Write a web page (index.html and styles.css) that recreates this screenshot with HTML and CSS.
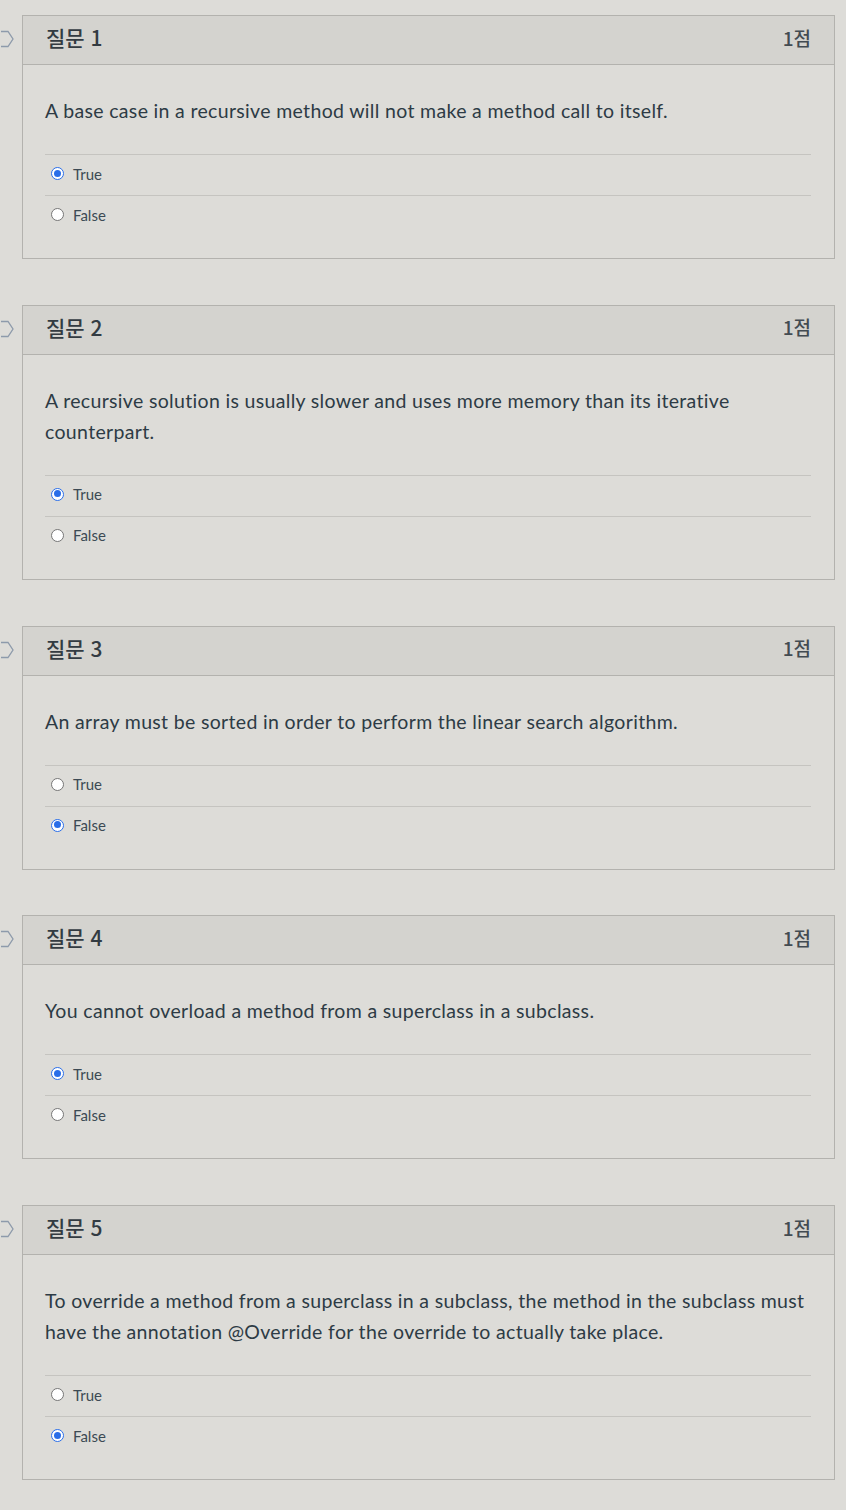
FILE: index.html
```html
<!DOCTYPE html>
<html lang="ko">
<head>
<meta charset="utf-8">
<link rel="stylesheet" href="styles.css">
</head>
<body>
<div class="quiz">
  <div class="question">
    <svg class="flag" width="14" height="18" viewBox="0 0 14 18"><path d="M-4 1.5 H7 L12 9 L7 16.5 H-4" fill="none" stroke="#8d9aab" stroke-width="1.3"/></svg>
    <div class="head"><span class="title">질문 1</span><span class="pts">1점</span></div>
    <div class="body">
      <div class="text">A base case in a recursive method will not make a method call to itself.</div>
      <div class="answers">
        <div class="ans"><span class="radio on"></span>True</div>
        <div class="ans"><span class="radio"></span>False</div>
      </div>
    </div>
  </div>
  <div class="question">
    <svg class="flag" width="14" height="18" viewBox="0 0 14 18"><path d="M-4 1.5 H7 L12 9 L7 16.5 H-4" fill="none" stroke="#8d9aab" stroke-width="1.3"/></svg>
    <div class="head"><span class="title">질문 2</span><span class="pts">1점</span></div>
    <div class="body">
      <div class="text">A recursive solution is usually slower and uses more memory than its iterative counterpart.</div>
      <div class="answers">
        <div class="ans"><span class="radio on"></span>True</div>
        <div class="ans"><span class="radio"></span>False</div>
      </div>
    </div>
  </div>
  <div class="question">
    <svg class="flag" width="14" height="18" viewBox="0 0 14 18"><path d="M-4 1.5 H7 L12 9 L7 16.5 H-4" fill="none" stroke="#8d9aab" stroke-width="1.3"/></svg>
    <div class="head"><span class="title">질문 3</span><span class="pts">1점</span></div>
    <div class="body">
      <div class="text">An array must be sorted in order to perform the linear search algorithm.</div>
      <div class="answers">
        <div class="ans"><span class="radio"></span>True</div>
        <div class="ans"><span class="radio on"></span>False</div>
      </div>
    </div>
  </div>
  <div class="question">
    <svg class="flag" width="14" height="18" viewBox="0 0 14 18"><path d="M-4 1.5 H7 L12 9 L7 16.5 H-4" fill="none" stroke="#8d9aab" stroke-width="1.3"/></svg>
    <div class="head"><span class="title">질문 4</span><span class="pts">1점</span></div>
    <div class="body">
      <div class="text">You cannot overload a method from a superclass in a subclass.</div>
      <div class="answers">
        <div class="ans"><span class="radio on"></span>True</div>
        <div class="ans"><span class="radio"></span>False</div>
      </div>
    </div>
  </div>
  <div class="question">
    <svg class="flag" width="14" height="18" viewBox="0 0 14 18"><path d="M-4 1.5 H7 L12 9 L7 16.5 H-4" fill="none" stroke="#8d9aab" stroke-width="1.3"/></svg>
    <div class="head"><span class="title">질문 5</span><span class="pts">1점</span></div>
    <div class="body">
      <div class="text">To override a method from a superclass in a subclass, the method in the subclass must have the annotation @Override for the override to actually take place.</div>
      <div class="answers">
        <div class="ans"><span class="radio"></span>True</div>
        <div class="ans"><span class="radio on"></span>False</div>
      </div>
    </div>
  </div>
</div>
</body>
</html>
```
FILE: styles.css
```css
html, body {
  margin: 0;
  padding: 0;
  background: #dddcd8;
}
body {
  font-family: Lato, "Noto Sans CJK KR", sans-serif;
  color: #2d3b45;
}
.quiz {
  padding: 15px 11px 30px 22px;
  display: flex;
  flex-direction: column;
  gap: 45.75px;
}
.question {
  position: relative;
  border: 1px solid #b3b2ae;
  background: #dddcd8;
}
.flag {
  position: absolute;
  left: -22px;
  top: 14px;
}
.head {
  height: 49px;
  background: #d4d3cf;
  border-bottom: 1px solid #b3b2ae;
  display: flex;
  justify-content: space-between;
  align-items: center;
  padding: 0 23px 6px 23px;
  box-sizing: border-box;
}
.title {
  font-family: "Noto Sans CJK KR", sans-serif;
  font-weight: 500;
  font-size: 21px;
  color: #333b42;
}
.pts {
  font-family: "Noto Sans CJK KR", sans-serif;
  font-weight: 500;
  font-size: 19px;
  color: #434b52;
}
.body {
  padding: 30px 23px 22px 22px;
}
.text {
  font-size: 19.5px;
  letter-spacing: 0.33px;
  line-height: 31px;
  color: #2d3b45;
  padding-bottom: 28px;
}
.answers {
  display: flex;
  flex-direction: column;
}
.ans {
  border-top: 1px solid #c5c4c0;
  height: 41px;
  display: flex;
  align-items: center;
  font-size: 15px;
  color: #3c4a54;
  padding-left: 6px;
  padding-bottom: 3px;
  box-sizing: border-box;
}
.radio {
  width: 13px;
  height: 13px;
  border-radius: 50%;
  border: 1px solid #767676;
  background: #fff;
  box-sizing: border-box;
  margin-right: 9px;
  position: relative;
}
.radio.on {
  border: 1.5px solid #2a6ee8;
  background: #fff;
}
.radio.on::after {
  content: "";
  position: absolute;
  left: 1.5px;
  top: 1.5px;
  width: 7px;
  height: 7px;
  border-radius: 50%;
  background: #2a6ee8;
}
```
